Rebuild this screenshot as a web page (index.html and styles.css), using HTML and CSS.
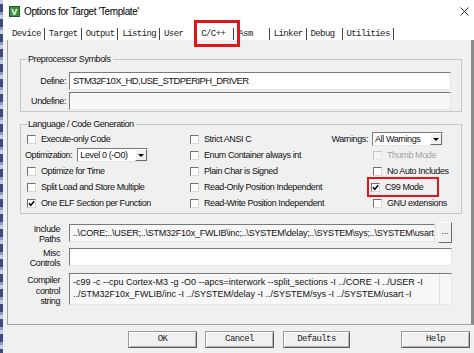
FILE: index.html
```html
<!DOCTYPE html>
<html lang="en">
<head>
  <meta charset="UTF-8" />
  <title>Options for Target 'Template'</title>
  <link rel="stylesheet" href="styles.css">
</head>
<body>
  <div class="screen">
    <div class="desk"></div>
    <div class="window">
      <div class="titlebar">
        <svg class="app-icon" viewBox="0 0 11 11">
          <rect x="0.5" y="0.5" width="10" height="10" fill="#3d8f41" stroke="#1f5f25"/>
          <text x="5" y="9" font-size="9" font-weight="bold" fill="#fff" text-anchor="middle" font-family="Liberation Sans">V</text>
        </svg>
        <span class="title">Options for Target 'Template'</span>
        <svg class="close" viewBox="0 0 9 9"><path d="M0.5 0.5 L8.5 8.5 M8.5 0.5 L0.5 8.5" stroke="#333" stroke-width="1"/></svg>
      </div>

      <div class="tabs">
        <span class="tab">Device</span>
        <span class="tab">Target</span>
        <span class="tab">Output</span>
        <span class="tab">Listing</span>
        <span class="tab before-active">User</span>
        <span class="tab active">C/C++</span>
        <span class="tab asm">Asm</span>
        <span class="tab">Linker</span>
        <span class="tab debug">Debug</span>
        <span class="tab">Utilities</span>
      </div>

      <div class="panel">
        <div class="groups">
          <fieldset class="group sym">
            <legend>Preprocessor Symbols</legend>
            <div class="sym-row"><span class="lbl">Define:</span><div class="edit def">STM32F10X_HD,USE_STDPERIPH_DRIVER</div></div>
            <div class="sym-row"><span class="lbl">Undefine:</span><div class="edit dim"></div></div>
          </fieldset>

          <fieldset class="group lang">
            <legend>Language / Code Generation</legend>
            <div class="opts">
              <div class="opt"><span class="chk"></span>Execute-only Code</div>
              <div class="opt"><span class="chk"></span>Strict ANSI C</div>
              <div class="warn-lbl">Warnings:</div>
              <div class="combo warn"><span class="combo-text">All Warnings</span><span class="arrow"></span></div>

              <div class="optim">Optimization:<div class="combo level"><span class="combo-text">Level 0 (-O0)</span><span class="arrow"></span></div></div>
              <div class="opt"><span class="chk"></span>Enum Container always int</div>
              <div></div>
              <div class="opt off"><span class="chk"></span>Thumb Mode</div>

              <div class="opt"><span class="chk"></span>Optimize for Time</div>
              <div class="opt"><span class="chk"></span>Plain Char is Signed</div>
              <div></div>
              <div class="opt"><span class="chk"></span>No Auto Includes</div>

              <div class="opt"><span class="chk"></span>Split Load and Store Multiple</div>
              <div class="opt"><span class="chk"></span>Read-Only Position Independent</div>
              <div></div>
              <div class="opt hl"><span class="chk"><svg viewBox="0 0 7 7"><path d="M1 3.3 L2.8 5.3 L6.2 1.2" fill="none" stroke="#000" stroke-width="1.5"/></svg></span>C99 Mode</div>

              <div class="opt"><span class="chk"><svg viewBox="0 0 7 7"><path d="M1 3.3 L2.8 5.3 L6.2 1.2" fill="none" stroke="#000" stroke-width="1.5"/></svg></span>One ELF Section per Function</div>
              <div class="opt"><span class="chk"></span>Read-Write Position Independent</div>
              <div></div>
              <div class="opt"><span class="chk"></span>GNU extensions</div>
            </div>
          </fieldset>
        </div>

        <div class="rows">
          <div class="frow inc">
            <div class="flbl">Include<br>Paths</div>
            <div class="field">
              <div class="edit ro">..\CORE;..\USER;..\STM32F10x_FWLIB\inc;..\SYSTEM\delay;..\SYSTEM\sys;..\SYSTEM\usart;..\</div>
              <div class="browse">...</div>
            </div>
          </div>
          <div class="frow misc">
            <div class="flbl">Misc<br>Controls</div>
            <div class="edit"></div>
          </div>
          <div class="frow comp">
            <div class="flbl">Compiler<br>control<br>string</div>
            <div class="cmd">
              <div class="cmd-text">-c99 -c --cpu Cortex-M3 -g -O0 --apcs=interwork --split_sections -I ../CORE -I ../USER -I<br>../STM32F10x_FWLIB/inc -I ../SYSTEM/delay -I ../SYSTEM/sys -I ../SYSTEM/usart -I</div>
              <div class="cmd-scroll"></div>
            </div>
          </div>
        </div>
      </div>

      <div class="buttons">
        <div class="btn">OK</div>
        <div class="btn">Cancel</div>
        <div class="btn defaults">Defaults</div>
        <div class="btn help">Help</div>
      </div>
    </div>
  </div>
</body>
</html>
```

FILE: styles.css
```css
* {
  box-sizing: border-box;
}

body {
  margin: 0;
  background: #f0f0f0;
  font-family: "Liberation Sans", Arial, sans-serif;
  font-size: 9px;
  letter-spacing: -0.4px;
  color: #111;
}

.screen {
  display: flex;
  width: 474px;
  height: 353px;
  overflow: hidden;
}

.desk {
  width: 3px;
  flex: none;
  background: repeating-linear-gradient(#c6cde3 0 4px, #3d4b7c 4px 12px, #8e9bc4 12px 15px);
}

.window {
  flex: 1;
  min-width: 0;
  display: flex;
  flex-direction: column;
  background: #f0f0f0;
}

/* title bar */
.titlebar {
  height: 22px;
  flex: none;
  display: flex;
  align-items: center;
  padding: 0 5px 0 6px;
  background: #fff;
}

.app-icon {
  width: 11px;
  height: 11px;
  margin-right: 4px;
}

.title {
  flex: 1;
  font-size: 10px;
  letter-spacing: -0.4px;
  color: #000;
}

.close {
  width: 9px;
  height: 9px;
}

/* tabs */
.tabs {
  height: 18px;
  flex: none;
  display: flex;
  align-items: flex-end;
  padding-left: 5px;
  background: #fff;
  font-family: "Liberation Mono", monospace;
  font-size: 9px;
  letter-spacing: -0.6px;
  color: #222;
}

.tab {
  line-height: 12px;
  padding: 0 3px 0 4px;
  border-right: 1px solid #444;
}

.tab.before-active {
  border-right: 0;
}

.tab.active {
  position: relative;
  padding: 0 8px 0 15px;
}

.tab.active::after {
  content: "";
  position: absolute;
  left: 8px;
  right: -7px;
  top: -8px;
  bottom: -7px;
  border: 3px solid #e4141b;
}

.tab.asm {
  padding-right: 16px;
}

.tab.debug {
  padding-right: 7px;
}

/* panel */
.panel {
  height: 285px;
  flex: none;
  min-width: 0;
  margin-left: 4px;
  border-left: 1px solid #a0a0a0;
  border-right: 3px solid #8a8a8a;
  border-bottom: 1px solid #a0a0a0;
}

.groups {
  padding: 13px 9px 0 12px;
}

.group {
  margin: 0;
  min-width: 0;
  padding: 7px 10px 1px 6px;
  border: 1px solid #c8c8c8;
}

.group legend {
  padding: 0 2px 0 1px;
  line-height: 12px;
}

.sym-row {
  display: grid;
  grid-template-columns: 39px minmax(0, 1fr);
  column-gap: 3px;
  align-items: center;
}

.sym-row + .sym-row {
  margin-top: 2px;
}

.lbl {
  text-align: right;
  white-space: nowrap;
}

.edit {
  height: 18px;
  min-width: 0;
  padding-left: 3px;
  line-height: 16px;
  background: #fff;
  border: 1px solid;
  border-color: #7a7a7a #e6e6e6 #e6e6e6 #7a7a7a;
  white-space: nowrap;
  overflow: hidden;
  color: #111;
}

.edit.def {
  font-size: 9.5px;
  letter-spacing: -0.6px;
}

.edit.dim,
.edit.ro {
  background: #f7f7f7;
}

.edit.ro {
  letter-spacing: -0.2px;
}

.group.lang {
  margin-top: 6px;
  padding: 1px 10px 2px 6px;
}

.opts {
  display: grid;
  grid-template-columns: 163px 139px 43px 1fr;
  grid-auto-rows: 16px;
  align-items: center;
}

.opt {
  display: flex;
  align-items: center;
  white-space: nowrap;
}

.chk {
  width: 9px;
  height: 9px;
  flex: none;
  margin-right: 5px;
  background: #fff;
  border: 1px solid;
  border-color: #707070 #d8d8d8 #d8d8d8 #707070;
  display: flex;
}

.chk svg {
  width: 7px;
  height: 7px;
}

.opt.off {
  color: #a3a3a3;
}

.opt.off .chk {
  background: #f4f4f4;
  border-color: #c4c4c4 #e6e6e6 #e6e6e6 #c4c4c4;
}

.opts > .opt:nth-child(4n) {
  padding-left: 1px;
}

.opt.hl {
  width: 66px;
  height: 14px;
  margin-left: -2px;
  padding-left: 3px;
  outline: 2px solid #e4141b;
  outline-offset: 1px;
}

.warn-lbl {
  text-align: right;
  padding-right: 4px;
}

.optim {
  display: flex;
  align-items: center;
  margin-left: -2px;
  white-space: nowrap;
}

.combo {
  height: 14px;
  display: flex;
  background: #fff;
  border: 1px solid;
  border-color: #7a7a7a #e6e6e6 #e6e6e6 #7a7a7a;
}

.combo.level {
  width: 71px;
  margin-left: 5px;
}

.combo.warn {
  width: 71px;
}

.combo-text {
  flex: 1;
  padding-left: 2px;
  line-height: 12px;
  white-space: nowrap;
  overflow: hidden;
}

.arrow {
  width: 12px;
  flex: none;
  display: flex;
  align-items: center;
  justify-content: center;
  background: #f0f0f0;
  border: 1px solid;
  border-color: #fff #707070 #707070 #fff;
}

.arrow::before {
  content: "";
  border-left: 3px solid transparent;
  border-right: 3px solid transparent;
  border-top: 3px solid #000;
}

/* lower fields */
.rows {
  padding: 8px 19px 0 0;
}

.frow {
  display: grid;
  grid-template-columns: 52px minmax(0, 1fr);
  column-gap: 9px;
  align-items: start;
}

.flbl {
  text-align: right;
  line-height: 10px;
  margin-top: 2px;
}

.frow.misc {
  margin-top: 4px;
}

.frow.misc .flbl {
  margin-top: 0;
}

.frow.comp {
  margin-top: 5px;
}

.frow.comp .flbl {
  line-height: 10.5px;
}

.field {
  height: 21px;
  min-width: 0;
  display: flex;
  align-items: center;
  gap: 3px;
}

.field .edit {
  flex: 1;
}

.browse {
  width: 14px;
  height: 21px;
  flex: none;
  text-align: center;
  line-height: 17px;
  letter-spacing: 0;
  background: #f0f0f0;
  border: 1px solid;
  border-color: #fff #6a6a6a #6a6a6a #fff;
}

.cmd {
  height: 32px;
  min-width: 0;
  display: flex;
  background: #f7f7f7;
  border: 1px solid;
  border-color: #7a7a7a #e6e6e6 #e6e6e6 #7a7a7a;
}

.cmd-text {
  flex: 1;
  min-width: 0;
  padding: 2px 0 0 3px;
  line-height: 12px;
  letter-spacing: 0;
  white-space: nowrap;
  overflow: hidden;
}

.cmd-scroll {
  width: 12px;
  flex: none;
  border-left: 1px solid #e2e2e2;
}

/* buttons */
.buttons {
  flex: 1;
  display: flex;
  align-items: flex-start;
  gap: 8px;
  padding: 6px 4px 0 125px;
}

.btn {
  width: 69px;
  height: 17px;
  text-align: center;
  line-height: 15px;
  font-family: "Liberation Mono", monospace;
  font-size: 9px;
  letter-spacing: -0.6px;
  color: #222;
  background: #f0f0f0;
  border: 1px solid;
  border-color: #9a9a9a #5a5a5a #5a5a5a #9a9a9a;
  box-shadow: inset 1px 1px 0 #fff, inset -1px -1px 0 #b4b4b4;
}

.btn.defaults {
  width: 67px;
  margin-left: 1px;
}

.btn.help {
  margin-left: auto;
}
```
